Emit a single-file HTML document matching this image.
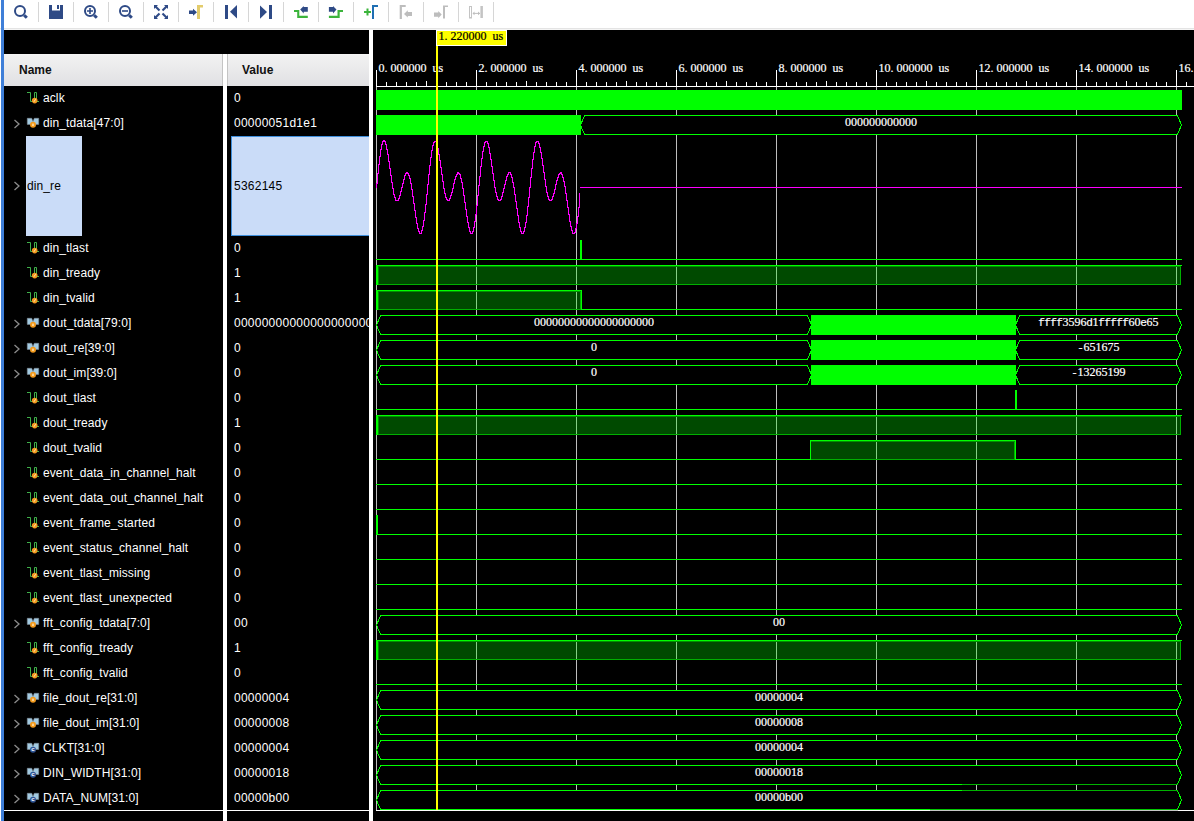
<!DOCTYPE html>
<html><head><meta charset="utf-8">
<style>
*{margin:0;padding:0;box-sizing:border-box}
html,body{width:1194px;height:821px;overflow:hidden;background:#fff}
body{position:relative;font-family:"Liberation Sans",sans-serif}
.abs{position:absolute}
.sep{position:absolute;top:2px;width:1px;height:20px;background:#d6d6d6}
.ic{position:absolute;overflow:visible}
.nm{position:absolute;font-size:12px;line-height:16px;color:#fff;white-space:nowrap;letter-spacing:0.1px}
.vl{letter-spacing:0.25px}
.sel{position:absolute;background:#cadcf8}
.vsel{position:absolute;background:#cadcf8;border:1px solid #3f8fdc;border-right:none}
.hdr{position:absolute;top:54px;height:32px;background:linear-gradient(#f6f6f6 0px,#f1f1f1 2px,#e1e1e4 31px);font-weight:bold;font-size:12px;color:#111}
.wave{position:absolute;left:373px;top:30px}
.ml{font-family:"Liberation Mono",monospace;font-size:11px}
.mono{font-family:"Liberation Serif",serif;font-size:12px;stroke:currentColor;stroke-width:0.2px}
</style></head><body>
<div class="abs" style="left:0;top:0;width:1194px;height:28px;background:#fff"></div>
<div class="abs" style="left:0;top:28px;width:1194px;height:1px;background:#e4e4e4"></div>
<div class="abs" style="left:0;top:29px;width:1194px;height:1px;background:#f4f4f4"></div>
<div class="sep" style="left:38px"></div><div class="sep" style="left:73px"></div><div class="sep" style="left:108px"></div><div class="sep" style="left:143px"></div><div class="sep" style="left:178px"></div><div class="sep" style="left:213px"></div><div class="sep" style="left:248px"></div><div class="sep" style="left:283px"></div><div class="sep" style="left:318px"></div><div class="sep" style="left:353px"></div><div class="sep" style="left:388px"></div><div class="sep" style="left:423px"></div><div class="sep" style="left:458px"></div><div class="sep" style="left:493px"></div>
<svg style="position:absolute;left:0;top:0" width="520" height="28" viewBox="0 0 520 28">
<g fill="none" stroke="#2e4a86" stroke-width="2">
 <circle cx="20" cy="11" r="5"/>
 <circle cx="90" cy="11" r="5"/>
 <circle cx="125" cy="11" r="5"/>
</g>
<g stroke="#2e4a86" stroke-width="3" stroke-linecap="butt">
 <path d="M24.2 15.2 L26.8 17.8"/><path d="M94.2 15.2 L96.8 17.8"/><path d="M129.2 15.2 L131.8 17.8"/>
</g>
<g stroke="#2e4a86" stroke-width="1.6"><path d="M87 11 H93 M90 8 V14"/><path d="M122 11 H128"/></g>
<path d="M49 5 H52 V10.5 H60 V5 H63 V19 H49 Z" fill="#2e4a86"/>
<rect x="57" y="5" width="2" height="4" fill="#2e4a86"/>
<g fill="#2e4a86">
 <path d="M154 5 H158 L154 9 Z"/><path d="M168 5 H164 L168 9 Z"/>
 <path d="M154 19 H158 L154 15 Z"/><path d="M168 19 H164 L168 15 Z"/>
</g>
<g stroke="#2e4a86" stroke-width="2.2">
 <path d="M155.5 6.5 L159.5 10.5"/><path d="M166.5 6.5 L162.5 10.5"/>
 <path d="M155.5 17.5 L159.5 13.5"/><path d="M166.5 17.5 L162.5 13.5"/>
</g>
<path d="M189 10.5 H193 V8.8 L197 12.3 L193 15.8 V14 H189 Z" fill="#2e4a86"/>
<path d="M197 19 V5 H203 V7.5 H200 V19 Z" fill="#e3cc6c"/>
<rect x="225" y="5" width="3" height="14" fill="#2e4a86"/>
<path d="M237 5 V18.5 L230 11.8 Z" fill="#2e4a86"/>
<rect x="269" y="5" width="3" height="14" fill="#2e4a86"/>
<path d="M260 5.5 V18.8 L267 12.1 Z" fill="#2e4a86"/>
<path d="M294 10 H299.3 V15.8 H307.8 V17.9 H297.2 V12 H294 Z" fill="#3cb43c"/>
<path d="M300.2 9.4 L303.7 5.9 V7 H307.8 V11.7 H303.7 V13.5 Z" fill="#2e4a86"/>
<path d="M328.9 15.8 H337.5 V10 H343 V12 H339.7 V17.9 H328.9 Z" fill="#3cb43c"/>
<path d="M336.5 9.4 L333 5.9 V7 H328.9 V11.7 H333 V13.5 Z" fill="#2e4a86"/>
<path d="M364 12 H371 M367.5 8.5 V15.5" stroke="#3cb43c" stroke-width="2"/>
<path d="M372 19 V5 H378 V7 H374 V19 Z" fill="#1f6fb3"/>
<path d="M399.7 19 V5 H405.7 V7 H401.9 V19 Z" fill="#bdbdbd"/>
<path d="M404 14 L407.8 10.3 V12 H412 V16 H407.8 V17.6 Z" fill="#bdbdbd"/>
<path d="M434 12.4 H438.3 V11 L441.7 14.4 L438.3 18.2 V16.8 H434 Z" fill="#bdbdbd"/>
<path d="M443 18.5 V5.5 H448 V7 H445 V18.5 Z" fill="#bdbdbd"/>
<rect x="469.5" y="6.5" width="2" height="11.5" fill="none" stroke="#c4c4c4" stroke-width="1"/>
<rect x="480.4" y="6" width="2.5" height="12" fill="#c4c4c4"/>
<path d="M473 13.4 H480" stroke="#bdbdbd" stroke-width="1"/>
<path d="M472.5 13.4 L474.5 11.6 V15.2 Z M480 13.4 L478 11.6 V15.2 Z" fill="#bdbdbd"/>
</svg>
<div class="abs" style="left:4px;top:30px;width:1190px;height:791px;background:#000"></div>
<div class="abs" style="left:1px;top:0;width:3px;height:821px;background:#3f7fd8"></div>
<div class="hdr" style="left:4px;width:219px;border-right:1px solid #c4c4c4"><span class="abs" style="left:15px;top:9px">Name</span></div>
<div class="abs" style="left:223px;top:54px;width:4px;height:767px;background:#fff"></div>
<div class="hdr" style="left:227px;width:142px;border-left:1px solid #c4c4c4"><span class="abs" style="left:14px;top:9px">Value</span></div>
<div class="abs" style="left:369px;top:30px;width:4px;height:791px;background:#fff"></div>
<svg class="ic" style="left:26px;top:91px" width="14" height="14" viewBox="0 0 14 14"><path d="M1 1.5 H4.5 V10.5 H8.5 V1.5 H10.5 V10.5 H13" fill="none" stroke="#3fb04a" stroke-width="1"/><circle cx="8.7" cy="9.6" r="2.8" fill="#f29a1e"/><path d="M7.9 10.8 L9.6 8.2" fill="none" stroke="#ffe8c8" stroke-width="0.9"/></svg><div class="nm" style="left:43px;top:90px">aclk</div><svg class="ic" style="left:12px;top:117.5px" width="10" height="12" viewBox="0 0 10 12"><path d="M2.5 2 L7 6 L2.5 10" fill="none" stroke="#8c8c8c" stroke-width="1.3"/></svg><svg class="ic" style="left:27px;top:117px" width="14" height="15" viewBox="0 0 14 15"><path d="M0.3 1.3 H4.7 L6 4.4 L7.3 1.3 H11.7 V7.4 H0.3 Z" fill="#a2cae2" stroke="#7d8c96" stroke-width="0.6"/><circle cx="6" cy="7.8" r="3" fill="#f29a1e"/><rect x="5.3" y="6.6" width="1.4" height="2.4" fill="#ffe8c0"/></svg><div class="nm" style="left:43px;top:115px">din_tdata[47:0]</div><div class="sel" style="left:26px;top:136px;width:56px;height:100px"></div><svg class="ic" style="left:12px;top:180.0px" width="10" height="12" viewBox="0 0 10 12"><path d="M2.5 2 L7 6 L2.5 10" fill="none" stroke="#8c8c8c" stroke-width="1.3"/></svg><div class="nm" style="left:27px;top:178px;color:#000">din_re</div><svg class="ic" style="left:26px;top:241px" width="14" height="14" viewBox="0 0 14 14"><path d="M1 1.5 H4.5 V10.5 H8.5 V1.5 H10.5 V10.5 H13" fill="none" stroke="#3fb04a" stroke-width="1"/><circle cx="8.7" cy="9.6" r="2.8" fill="#f29a1e"/><path d="M7.9 10.8 L9.6 8.2" fill="none" stroke="#ffe8c8" stroke-width="0.9"/></svg><div class="nm" style="left:43px;top:240px">din_tlast</div><svg class="ic" style="left:26px;top:266px" width="14" height="14" viewBox="0 0 14 14"><path d="M1 1.5 H4.5 V10.5 H8.5 V1.5 H10.5 V10.5 H13" fill="none" stroke="#3fb04a" stroke-width="1"/><circle cx="8.7" cy="9.6" r="2.8" fill="#f29a1e"/><path d="M7.9 10.8 L9.6 8.2" fill="none" stroke="#ffe8c8" stroke-width="0.9"/></svg><div class="nm" style="left:43px;top:265px">din_tready</div><svg class="ic" style="left:26px;top:291px" width="14" height="14" viewBox="0 0 14 14"><path d="M1 1.5 H4.5 V10.5 H8.5 V1.5 H10.5 V10.5 H13" fill="none" stroke="#3fb04a" stroke-width="1"/><circle cx="8.7" cy="9.6" r="2.8" fill="#f29a1e"/><path d="M7.9 10.8 L9.6 8.2" fill="none" stroke="#ffe8c8" stroke-width="0.9"/></svg><div class="nm" style="left:43px;top:290px">din_tvalid</div><svg class="ic" style="left:12px;top:317.5px" width="10" height="12" viewBox="0 0 10 12"><path d="M2.5 2 L7 6 L2.5 10" fill="none" stroke="#8c8c8c" stroke-width="1.3"/></svg><svg class="ic" style="left:27px;top:317px" width="14" height="15" viewBox="0 0 14 15"><path d="M0.3 1.3 H4.7 L6 4.4 L7.3 1.3 H11.7 V7.4 H0.3 Z" fill="#a2cae2" stroke="#7d8c96" stroke-width="0.6"/><circle cx="6" cy="7.8" r="3" fill="#f29a1e"/><rect x="5.3" y="6.6" width="1.4" height="2.4" fill="#ffe8c0"/></svg><div class="nm" style="left:43px;top:315px">dout_tdata[79:0]</div><svg class="ic" style="left:12px;top:342.5px" width="10" height="12" viewBox="0 0 10 12"><path d="M2.5 2 L7 6 L2.5 10" fill="none" stroke="#8c8c8c" stroke-width="1.3"/></svg><svg class="ic" style="left:27px;top:342px" width="14" height="15" viewBox="0 0 14 15"><path d="M0.3 1.3 H4.7 L6 4.4 L7.3 1.3 H11.7 V7.4 H0.3 Z" fill="#a2cae2" stroke="#7d8c96" stroke-width="0.6"/><circle cx="6" cy="7.8" r="3" fill="#f29a1e"/><rect x="5.3" y="6.6" width="1.4" height="2.4" fill="#ffe8c0"/></svg><div class="nm" style="left:43px;top:340px">dout_re[39:0]</div><svg class="ic" style="left:12px;top:367.5px" width="10" height="12" viewBox="0 0 10 12"><path d="M2.5 2 L7 6 L2.5 10" fill="none" stroke="#8c8c8c" stroke-width="1.3"/></svg><svg class="ic" style="left:27px;top:367px" width="14" height="15" viewBox="0 0 14 15"><path d="M0.3 1.3 H4.7 L6 4.4 L7.3 1.3 H11.7 V7.4 H0.3 Z" fill="#a2cae2" stroke="#7d8c96" stroke-width="0.6"/><circle cx="6" cy="7.8" r="3" fill="#f29a1e"/><rect x="5.3" y="6.6" width="1.4" height="2.4" fill="#ffe8c0"/></svg><div class="nm" style="left:43px;top:365px">dout_im[39:0]</div><svg class="ic" style="left:26px;top:391px" width="14" height="14" viewBox="0 0 14 14"><path d="M1 1.5 H4.5 V10.5 H8.5 V1.5 H10.5 V10.5 H13" fill="none" stroke="#3fb04a" stroke-width="1"/><circle cx="8.7" cy="9.6" r="2.8" fill="#f29a1e"/><path d="M7.9 10.8 L9.6 8.2" fill="none" stroke="#ffe8c8" stroke-width="0.9"/></svg><div class="nm" style="left:43px;top:390px">dout_tlast</div><svg class="ic" style="left:26px;top:416px" width="14" height="14" viewBox="0 0 14 14"><path d="M1 1.5 H4.5 V10.5 H8.5 V1.5 H10.5 V10.5 H13" fill="none" stroke="#3fb04a" stroke-width="1"/><circle cx="8.7" cy="9.6" r="2.8" fill="#f29a1e"/><path d="M7.9 10.8 L9.6 8.2" fill="none" stroke="#ffe8c8" stroke-width="0.9"/></svg><div class="nm" style="left:43px;top:415px">dout_tready</div><svg class="ic" style="left:26px;top:441px" width="14" height="14" viewBox="0 0 14 14"><path d="M1 1.5 H4.5 V10.5 H8.5 V1.5 H10.5 V10.5 H13" fill="none" stroke="#3fb04a" stroke-width="1"/><circle cx="8.7" cy="9.6" r="2.8" fill="#f29a1e"/><path d="M7.9 10.8 L9.6 8.2" fill="none" stroke="#ffe8c8" stroke-width="0.9"/></svg><div class="nm" style="left:43px;top:440px">dout_tvalid</div><svg class="ic" style="left:26px;top:466px" width="14" height="14" viewBox="0 0 14 14"><path d="M1 1.5 H4.5 V10.5 H8.5 V1.5 H10.5 V10.5 H13" fill="none" stroke="#3fb04a" stroke-width="1"/><circle cx="8.7" cy="9.6" r="2.8" fill="#f29a1e"/><path d="M7.9 10.8 L9.6 8.2" fill="none" stroke="#ffe8c8" stroke-width="0.9"/></svg><div class="nm" style="left:43px;top:465px">event_data_in_channel_halt</div><svg class="ic" style="left:26px;top:491px" width="14" height="14" viewBox="0 0 14 14"><path d="M1 1.5 H4.5 V10.5 H8.5 V1.5 H10.5 V10.5 H13" fill="none" stroke="#3fb04a" stroke-width="1"/><circle cx="8.7" cy="9.6" r="2.8" fill="#f29a1e"/><path d="M7.9 10.8 L9.6 8.2" fill="none" stroke="#ffe8c8" stroke-width="0.9"/></svg><div class="nm" style="left:43px;top:490px">event_data_out_channel_halt</div><svg class="ic" style="left:26px;top:516px" width="14" height="14" viewBox="0 0 14 14"><path d="M1 1.5 H4.5 V10.5 H8.5 V1.5 H10.5 V10.5 H13" fill="none" stroke="#3fb04a" stroke-width="1"/><circle cx="8.7" cy="9.6" r="2.8" fill="#f29a1e"/><path d="M7.9 10.8 L9.6 8.2" fill="none" stroke="#ffe8c8" stroke-width="0.9"/></svg><div class="nm" style="left:43px;top:515px">event_frame_started</div><svg class="ic" style="left:26px;top:541px" width="14" height="14" viewBox="0 0 14 14"><path d="M1 1.5 H4.5 V10.5 H8.5 V1.5 H10.5 V10.5 H13" fill="none" stroke="#3fb04a" stroke-width="1"/><circle cx="8.7" cy="9.6" r="2.8" fill="#f29a1e"/><path d="M7.9 10.8 L9.6 8.2" fill="none" stroke="#ffe8c8" stroke-width="0.9"/></svg><div class="nm" style="left:43px;top:540px">event_status_channel_halt</div><svg class="ic" style="left:26px;top:566px" width="14" height="14" viewBox="0 0 14 14"><path d="M1 1.5 H4.5 V10.5 H8.5 V1.5 H10.5 V10.5 H13" fill="none" stroke="#3fb04a" stroke-width="1"/><circle cx="8.7" cy="9.6" r="2.8" fill="#f29a1e"/><path d="M7.9 10.8 L9.6 8.2" fill="none" stroke="#ffe8c8" stroke-width="0.9"/></svg><div class="nm" style="left:43px;top:565px">event_tlast_missing</div><svg class="ic" style="left:26px;top:591px" width="14" height="14" viewBox="0 0 14 14"><path d="M1 1.5 H4.5 V10.5 H8.5 V1.5 H10.5 V10.5 H13" fill="none" stroke="#3fb04a" stroke-width="1"/><circle cx="8.7" cy="9.6" r="2.8" fill="#f29a1e"/><path d="M7.9 10.8 L9.6 8.2" fill="none" stroke="#ffe8c8" stroke-width="0.9"/></svg><div class="nm" style="left:43px;top:590px">event_tlast_unexpected</div><svg class="ic" style="left:12px;top:617.5px" width="10" height="12" viewBox="0 0 10 12"><path d="M2.5 2 L7 6 L2.5 10" fill="none" stroke="#8c8c8c" stroke-width="1.3"/></svg><svg class="ic" style="left:27px;top:617px" width="14" height="15" viewBox="0 0 14 15"><path d="M0.3 1.3 H4.7 L6 4.4 L7.3 1.3 H11.7 V7.4 H0.3 Z" fill="#a2cae2" stroke="#7d8c96" stroke-width="0.6"/><circle cx="6" cy="7.8" r="3" fill="#f29a1e"/><rect x="5.3" y="6.6" width="1.4" height="2.4" fill="#ffe8c0"/></svg><div class="nm" style="left:43px;top:615px">fft_config_tdata[7:0]</div><svg class="ic" style="left:26px;top:641px" width="14" height="14" viewBox="0 0 14 14"><path d="M1 1.5 H4.5 V10.5 H8.5 V1.5 H10.5 V10.5 H13" fill="none" stroke="#3fb04a" stroke-width="1"/><circle cx="8.7" cy="9.6" r="2.8" fill="#f29a1e"/><path d="M7.9 10.8 L9.6 8.2" fill="none" stroke="#ffe8c8" stroke-width="0.9"/></svg><div class="nm" style="left:43px;top:640px">fft_config_tready</div><svg class="ic" style="left:26px;top:666px" width="14" height="14" viewBox="0 0 14 14"><path d="M1 1.5 H4.5 V10.5 H8.5 V1.5 H10.5 V10.5 H13" fill="none" stroke="#3fb04a" stroke-width="1"/><circle cx="8.7" cy="9.6" r="2.8" fill="#f29a1e"/><path d="M7.9 10.8 L9.6 8.2" fill="none" stroke="#ffe8c8" stroke-width="0.9"/></svg><div class="nm" style="left:43px;top:665px">fft_config_tvalid</div><svg class="ic" style="left:12px;top:692.5px" width="10" height="12" viewBox="0 0 10 12"><path d="M2.5 2 L7 6 L2.5 10" fill="none" stroke="#8c8c8c" stroke-width="1.3"/></svg><svg class="ic" style="left:27px;top:692px" width="14" height="15" viewBox="0 0 14 15"><path d="M0.3 1.3 H4.7 L6 4.4 L7.3 1.3 H11.7 V7.4 H0.3 Z" fill="#a2cae2" stroke="#7d8c96" stroke-width="0.6"/><circle cx="6" cy="7.8" r="3" fill="#f29a1e"/><rect x="5.3" y="6.6" width="1.4" height="2.4" fill="#ffe8c0"/></svg><div class="nm" style="left:43px;top:690px">file_dout_re[31:0]</div><svg class="ic" style="left:12px;top:717.5px" width="10" height="12" viewBox="0 0 10 12"><path d="M2.5 2 L7 6 L2.5 10" fill="none" stroke="#8c8c8c" stroke-width="1.3"/></svg><svg class="ic" style="left:27px;top:717px" width="14" height="15" viewBox="0 0 14 15"><path d="M0.3 1.3 H4.7 L6 4.4 L7.3 1.3 H11.7 V7.4 H0.3 Z" fill="#a2cae2" stroke="#7d8c96" stroke-width="0.6"/><circle cx="6" cy="7.8" r="3" fill="#f29a1e"/><rect x="5.3" y="6.6" width="1.4" height="2.4" fill="#ffe8c0"/></svg><div class="nm" style="left:43px;top:715px">file_dout_im[31:0]</div><svg class="ic" style="left:12px;top:742.5px" width="10" height="12" viewBox="0 0 10 12"><path d="M2.5 2 L7 6 L2.5 10" fill="none" stroke="#8c8c8c" stroke-width="1.3"/></svg><svg class="ic" style="left:27px;top:742px" width="14" height="15" viewBox="0 0 14 15"><path d="M0.3 1.3 H4.7 L6 4.4 L7.3 1.3 H11.7 V7.4 H0.3 Z" fill="#a2cae2" stroke="#7d8c96" stroke-width="0.6"/><circle cx="6" cy="7.8" r="3" fill="#2f5596"/><text x="6" y="9.4" font-size="6" font-weight="bold" fill="#fff" text-anchor="middle" font-family="Liberation Sans">c</text></svg><div class="nm" style="left:43px;top:740px">CLKT[31:0]</div><svg class="ic" style="left:12px;top:767.5px" width="10" height="12" viewBox="0 0 10 12"><path d="M2.5 2 L7 6 L2.5 10" fill="none" stroke="#8c8c8c" stroke-width="1.3"/></svg><svg class="ic" style="left:27px;top:767px" width="14" height="15" viewBox="0 0 14 15"><path d="M0.3 1.3 H4.7 L6 4.4 L7.3 1.3 H11.7 V7.4 H0.3 Z" fill="#a2cae2" stroke="#7d8c96" stroke-width="0.6"/><circle cx="6" cy="7.8" r="3" fill="#2f5596"/><text x="6" y="9.4" font-size="6" font-weight="bold" fill="#fff" text-anchor="middle" font-family="Liberation Sans">c</text></svg><div class="nm" style="left:43px;top:765px">DIN_WIDTH[31:0]</div><svg class="ic" style="left:12px;top:792.5px" width="10" height="12" viewBox="0 0 10 12"><path d="M2.5 2 L7 6 L2.5 10" fill="none" stroke="#8c8c8c" stroke-width="1.3"/></svg><svg class="ic" style="left:27px;top:792px" width="14" height="15" viewBox="0 0 14 15"><path d="M0.3 1.3 H4.7 L6 4.4 L7.3 1.3 H11.7 V7.4 H0.3 Z" fill="#a2cae2" stroke="#7d8c96" stroke-width="0.6"/><circle cx="6" cy="7.8" r="3" fill="#2f5596"/><text x="6" y="9.4" font-size="6" font-weight="bold" fill="#fff" text-anchor="middle" font-family="Liberation Sans">c</text></svg><div class="nm" style="left:43px;top:790px">DATA_NUM[31:0]</div>
<div class="nm vl" style="left:234px;top:90px">0</div><div class="nm vl" style="left:234px;top:115px">00000051d1e1</div><div class="vsel" style="left:231px;top:136px;width:138px;height:100px"></div><div class="nm vl" style="left:234px;top:178px;color:#000">5362145</div><div class="nm vl" style="left:234px;top:240px">0</div><div class="nm vl" style="left:234px;top:265px">1</div><div class="nm vl" style="left:234px;top:290px">1</div><div class="nm vl" style="left:234px;top:315px">00000000000000000000</div><div class="nm vl" style="left:234px;top:340px">0</div><div class="nm vl" style="left:234px;top:365px">0</div><div class="nm vl" style="left:234px;top:390px">0</div><div class="nm vl" style="left:234px;top:415px">1</div><div class="nm vl" style="left:234px;top:440px">0</div><div class="nm vl" style="left:234px;top:465px">0</div><div class="nm vl" style="left:234px;top:490px">0</div><div class="nm vl" style="left:234px;top:515px">0</div><div class="nm vl" style="left:234px;top:540px">0</div><div class="nm vl" style="left:234px;top:565px">0</div><div class="nm vl" style="left:234px;top:590px">0</div><div class="nm vl" style="left:234px;top:615px">00</div><div class="nm vl" style="left:234px;top:640px">1</div><div class="nm vl" style="left:234px;top:665px">0</div><div class="nm vl" style="left:234px;top:690px">00000004</div><div class="nm vl" style="left:234px;top:715px">00000008</div><div class="nm vl" style="left:234px;top:740px">00000004</div><div class="nm vl" style="left:234px;top:765px">00000018</div><div class="nm vl" style="left:234px;top:790px">00000b00</div>
<div class="abs" style="left:4px;top:810px;width:219px;height:1px;background:#fff"></div>
<div class="abs" style="left:227px;top:810px;width:142px;height:1px;background:#fff"></div>
<svg class="wave" width="821" height="791" viewBox="373 30 821 791" shape-rendering="crispEdges"><text y="72" class="mono" fill="#fff" style="color:#fff"><tspan x="378.5">0</tspan><tspan x="384.5">.</tspan><tspan x="390.5">0</tspan><tspan x="396.5">0</tspan><tspan x="402.5">0</tspan><tspan x="408.5">0</tspan><tspan x="414.5">0</tspan><tspan x="420.5">0</tspan><tspan x="432.5">u</tspan><tspan x="438.5">s</tspan></text><text y="72" class="mono" fill="#fff" style="color:#fff"><tspan x="478.5">2</tspan><tspan x="484.5">.</tspan><tspan x="490.5">0</tspan><tspan x="496.5">0</tspan><tspan x="502.5">0</tspan><tspan x="508.5">0</tspan><tspan x="514.5">0</tspan><tspan x="520.5">0</tspan><tspan x="532.5">u</tspan><tspan x="538.5">s</tspan></text><text y="72" class="mono" fill="#fff" style="color:#fff"><tspan x="578.5">4</tspan><tspan x="584.5">.</tspan><tspan x="590.5">0</tspan><tspan x="596.5">0</tspan><tspan x="602.5">0</tspan><tspan x="608.5">0</tspan><tspan x="614.5">0</tspan><tspan x="620.5">0</tspan><tspan x="632.5">u</tspan><tspan x="638.5">s</tspan></text><text y="72" class="mono" fill="#fff" style="color:#fff"><tspan x="678.5">6</tspan><tspan x="684.5">.</tspan><tspan x="690.5">0</tspan><tspan x="696.5">0</tspan><tspan x="702.5">0</tspan><tspan x="708.5">0</tspan><tspan x="714.5">0</tspan><tspan x="720.5">0</tspan><tspan x="732.5">u</tspan><tspan x="738.5">s</tspan></text><text y="72" class="mono" fill="#fff" style="color:#fff"><tspan x="778.5">8</tspan><tspan x="784.5">.</tspan><tspan x="790.5">0</tspan><tspan x="796.5">0</tspan><tspan x="802.5">0</tspan><tspan x="808.5">0</tspan><tspan x="814.5">0</tspan><tspan x="820.5">0</tspan><tspan x="832.5">u</tspan><tspan x="838.5">s</tspan></text><text y="72" class="mono" fill="#fff" style="color:#fff"><tspan x="878.5">1</tspan><tspan x="884.5">0</tspan><tspan x="890.5">.</tspan><tspan x="896.5">0</tspan><tspan x="902.5">0</tspan><tspan x="908.5">0</tspan><tspan x="914.5">0</tspan><tspan x="920.5">0</tspan><tspan x="926.5">0</tspan><tspan x="938.5">u</tspan><tspan x="944.5">s</tspan></text><text y="72" class="mono" fill="#fff" style="color:#fff"><tspan x="978.5">1</tspan><tspan x="984.5">2</tspan><tspan x="990.5">.</tspan><tspan x="996.5">0</tspan><tspan x="1002.5">0</tspan><tspan x="1008.5">0</tspan><tspan x="1014.5">0</tspan><tspan x="1020.5">0</tspan><tspan x="1026.5">0</tspan><tspan x="1038.5">u</tspan><tspan x="1044.5">s</tspan></text><text y="72" class="mono" fill="#fff" style="color:#fff"><tspan x="1078.5">1</tspan><tspan x="1084.5">4</tspan><tspan x="1090.5">.</tspan><tspan x="1096.5">0</tspan><tspan x="1102.5">0</tspan><tspan x="1108.5">0</tspan><tspan x="1114.5">0</tspan><tspan x="1120.5">0</tspan><tspan x="1126.5">0</tspan><tspan x="1138.5">u</tspan><tspan x="1144.5">s</tspan></text><text y="72" class="mono" fill="#fff" style="color:#fff"><tspan x="1178.5">1</tspan><tspan x="1184.5">6</tspan><tspan x="1190.5">.</tspan><tspan x="1196.5">0</tspan><tspan x="1202.5">0</tspan><tspan x="1208.5">0</tspan><tspan x="1214.5">0</tspan><tspan x="1220.5">0</tspan><tspan x="1226.5">0</tspan><tspan x="1238.5">u</tspan><tspan x="1244.5">s</tspan></text><rect x="376" y="87" width="1" height="723" fill="#bdbdbd"/><rect x="476" y="87" width="1" height="723" fill="#bdbdbd"/><rect x="576" y="87" width="1" height="723" fill="#bdbdbd"/><rect x="676" y="87" width="1" height="723" fill="#bdbdbd"/><rect x="776" y="87" width="1" height="723" fill="#bdbdbd"/><rect x="876" y="87" width="1" height="723" fill="#bdbdbd"/><rect x="976" y="87" width="1" height="723" fill="#bdbdbd"/><rect x="1076" y="87" width="1" height="723" fill="#bdbdbd"/><rect x="1176" y="87" width="1" height="723" fill="#bdbdbd"/><rect x="376" y="86" width="818" height="1" fill="#fff"/><rect x="376" y="70" width="1" height="16" fill="#fff"/><rect x="386" y="82" width="1" height="4" fill="#fff"/><rect x="396" y="82" width="1" height="4" fill="#fff"/><rect x="406" y="82" width="1" height="4" fill="#fff"/><rect x="416" y="82" width="1" height="4" fill="#fff"/><rect x="426" y="81" width="1" height="5" fill="#fff"/><rect x="436" y="82" width="1" height="4" fill="#fff"/><rect x="446" y="82" width="1" height="4" fill="#fff"/><rect x="456" y="82" width="1" height="4" fill="#fff"/><rect x="466" y="82" width="1" height="4" fill="#fff"/><rect x="476" y="70" width="1" height="16" fill="#fff"/><rect x="486" y="82" width="1" height="4" fill="#fff"/><rect x="496" y="82" width="1" height="4" fill="#fff"/><rect x="506" y="82" width="1" height="4" fill="#fff"/><rect x="516" y="82" width="1" height="4" fill="#fff"/><rect x="526" y="81" width="1" height="5" fill="#fff"/><rect x="536" y="82" width="1" height="4" fill="#fff"/><rect x="546" y="82" width="1" height="4" fill="#fff"/><rect x="556" y="82" width="1" height="4" fill="#fff"/><rect x="566" y="82" width="1" height="4" fill="#fff"/><rect x="576" y="70" width="1" height="16" fill="#fff"/><rect x="586" y="82" width="1" height="4" fill="#fff"/><rect x="596" y="82" width="1" height="4" fill="#fff"/><rect x="606" y="82" width="1" height="4" fill="#fff"/><rect x="616" y="82" width="1" height="4" fill="#fff"/><rect x="626" y="81" width="1" height="5" fill="#fff"/><rect x="636" y="82" width="1" height="4" fill="#fff"/><rect x="646" y="82" width="1" height="4" fill="#fff"/><rect x="656" y="82" width="1" height="4" fill="#fff"/><rect x="666" y="82" width="1" height="4" fill="#fff"/><rect x="676" y="70" width="1" height="16" fill="#fff"/><rect x="686" y="82" width="1" height="4" fill="#fff"/><rect x="696" y="82" width="1" height="4" fill="#fff"/><rect x="706" y="82" width="1" height="4" fill="#fff"/><rect x="716" y="82" width="1" height="4" fill="#fff"/><rect x="726" y="81" width="1" height="5" fill="#fff"/><rect x="736" y="82" width="1" height="4" fill="#fff"/><rect x="746" y="82" width="1" height="4" fill="#fff"/><rect x="756" y="82" width="1" height="4" fill="#fff"/><rect x="766" y="82" width="1" height="4" fill="#fff"/><rect x="776" y="70" width="1" height="16" fill="#fff"/><rect x="786" y="82" width="1" height="4" fill="#fff"/><rect x="796" y="82" width="1" height="4" fill="#fff"/><rect x="806" y="82" width="1" height="4" fill="#fff"/><rect x="816" y="82" width="1" height="4" fill="#fff"/><rect x="826" y="81" width="1" height="5" fill="#fff"/><rect x="836" y="82" width="1" height="4" fill="#fff"/><rect x="846" y="82" width="1" height="4" fill="#fff"/><rect x="856" y="82" width="1" height="4" fill="#fff"/><rect x="866" y="82" width="1" height="4" fill="#fff"/><rect x="876" y="70" width="1" height="16" fill="#fff"/><rect x="886" y="82" width="1" height="4" fill="#fff"/><rect x="896" y="82" width="1" height="4" fill="#fff"/><rect x="906" y="82" width="1" height="4" fill="#fff"/><rect x="916" y="82" width="1" height="4" fill="#fff"/><rect x="926" y="81" width="1" height="5" fill="#fff"/><rect x="936" y="82" width="1" height="4" fill="#fff"/><rect x="946" y="82" width="1" height="4" fill="#fff"/><rect x="956" y="82" width="1" height="4" fill="#fff"/><rect x="966" y="82" width="1" height="4" fill="#fff"/><rect x="976" y="70" width="1" height="16" fill="#fff"/><rect x="986" y="82" width="1" height="4" fill="#fff"/><rect x="996" y="82" width="1" height="4" fill="#fff"/><rect x="1006" y="82" width="1" height="4" fill="#fff"/><rect x="1016" y="82" width="1" height="4" fill="#fff"/><rect x="1026" y="81" width="1" height="5" fill="#fff"/><rect x="1036" y="82" width="1" height="4" fill="#fff"/><rect x="1046" y="82" width="1" height="4" fill="#fff"/><rect x="1056" y="82" width="1" height="4" fill="#fff"/><rect x="1066" y="82" width="1" height="4" fill="#fff"/><rect x="1076" y="70" width="1" height="16" fill="#fff"/><rect x="1086" y="82" width="1" height="4" fill="#fff"/><rect x="1096" y="82" width="1" height="4" fill="#fff"/><rect x="1106" y="82" width="1" height="4" fill="#fff"/><rect x="1116" y="82" width="1" height="4" fill="#fff"/><rect x="1126" y="81" width="1" height="5" fill="#fff"/><rect x="1136" y="82" width="1" height="4" fill="#fff"/><rect x="1146" y="82" width="1" height="4" fill="#fff"/><rect x="1156" y="82" width="1" height="4" fill="#fff"/><rect x="1166" y="82" width="1" height="4" fill="#fff"/><rect x="1176" y="70" width="1" height="16" fill="#fff"/><rect x="1186" y="82" width="1" height="4" fill="#fff"/><rect x="376" y="90" width="806" height="20" fill="#00ff00"/><rect x="376" y="115" width="205" height="20" fill="#00ff00"/><polygon points="580.5,125 584.5,115.5 1177.5,115.5 1181.5,125 1177.5,134.5 584.5,134.5" fill="#000" stroke="#00ff00" stroke-width="1"/><text y="126" class="mono" fill="#fff" style="color:#fff"><tspan x="845.0">0</tspan><tspan x="851.0">0</tspan><tspan x="857.0">0</tspan><tspan x="863.0">0</tspan><tspan x="869.0">0</tspan><tspan x="875.0">0</tspan><tspan x="881.0">0</tspan><tspan x="887.0">0</tspan><tspan x="893.0">0</tspan><tspan x="899.0">0</tspan><tspan x="905.0">0</tspan><tspan x="911.0">0</tspan></text><rect x="376" y="259" width="806" height="1" fill="#00ff00"/><rect x="580" y="240" width="2" height="20" fill="#00ff00"/><rect x="376" y="265" width="805" height="20" fill="rgba(0,255,0,0.29)"/><rect x="376" y="284" width="805" height="1" fill="#00b000"/><rect x="1180" y="266" width="1" height="18" fill="#00b000"/><rect x="376" y="266" width="805" height="1" fill="#009000"/><rect x="376" y="265" width="806" height="1" fill="#00ff00"/><rect x="378" y="266" width="1" height="18" fill="#009000"/><rect x="376" y="265" width="2" height="20" fill="#00ff00"/><rect x="376" y="290" width="205" height="20" fill="rgba(0,255,0,0.29)"/><rect x="376" y="309" width="205" height="1" fill="#00b000"/><rect x="580" y="291" width="1" height="18" fill="#00b000"/><rect x="376" y="291" width="205" height="1" fill="#009000"/><rect x="376" y="290" width="206" height="1" fill="#00ff00"/><rect x="378" y="291" width="1" height="18" fill="#009000"/><rect x="376" y="290" width="2" height="20" fill="#00ff00"/><rect x="581" y="290" width="1" height="20" fill="#00ff00"/><rect x="581" y="309" width="601" height="1" fill="#00ff00"/><polygon points="376.5,325 380.5,315.5 807.5,315.5 811.5,325 807.5,334.5 380.5,334.5" fill="#000" stroke="#00ff00" stroke-width="1"/><text y="326" class="mono" fill="#fff" style="color:#fff"><tspan x="534.0">0</tspan><tspan x="540.0">0</tspan><tspan x="546.0">0</tspan><tspan x="552.0">0</tspan><tspan x="558.0">0</tspan><tspan x="564.0">0</tspan><tspan x="570.0">0</tspan><tspan x="576.0">0</tspan><tspan x="582.0">0</tspan><tspan x="588.0">0</tspan><tspan x="594.0">0</tspan><tspan x="600.0">0</tspan><tspan x="606.0">0</tspan><tspan x="612.0">0</tspan><tspan x="618.0">0</tspan><tspan x="624.0">0</tspan><tspan x="630.0">0</tspan><tspan x="636.0">0</tspan><tspan x="642.0">0</tspan><tspan x="648.0">0</tspan></text><rect x="811" y="315" width="205" height="20" fill="#00ff00"/><polygon points="1015.5,325 1019.5,315.5 1177.5,315.5 1181.5,325 1177.5,334.5 1019.5,334.5" fill="#000" stroke="#00ff00" stroke-width="1"/><text y="326" class="mono" fill="#fff" style="color:#fff"><tspan class="ml" x="1038.3">f</tspan><tspan class="ml" x="1044.3">f</tspan><tspan class="ml" x="1050.3">f</tspan><tspan class="ml" x="1056.3">f</tspan><tspan x="1062.5">3</tspan><tspan x="1068.5">5</tspan><tspan x="1074.5">9</tspan><tspan x="1080.5">6</tspan><tspan class="ml" x="1086.3">d</tspan><tspan x="1092.5">1</tspan><tspan class="ml" x="1098.3">f</tspan><tspan class="ml" x="1104.3">f</tspan><tspan class="ml" x="1110.3">f</tspan><tspan class="ml" x="1116.3">f</tspan><tspan class="ml" x="1122.3">f</tspan><tspan x="1128.5">6</tspan><tspan x="1134.5">0</tspan><tspan class="ml" x="1140.3">e</tspan><tspan x="1146.5">6</tspan><tspan x="1152.5">5</tspan></text><polygon points="376.5,350 380.5,340.5 807.5,340.5 811.5,350 807.5,359.5 380.5,359.5" fill="#000" stroke="#00ff00" stroke-width="1"/><text y="351" class="mono" fill="#fff" style="color:#fff"><tspan x="591.0">0</tspan></text><rect x="811" y="340" width="205" height="20" fill="#00ff00"/><polygon points="1015.5,350 1019.5,340.5 1177.5,340.5 1181.5,350 1177.5,359.5 1019.5,359.5" fill="#000" stroke="#00ff00" stroke-width="1"/><text y="351" class="mono" fill="#fff" style="color:#fff"><tspan class="ml" x="1077.3">-</tspan><tspan x="1083.5">6</tspan><tspan x="1089.5">5</tspan><tspan x="1095.5">1</tspan><tspan x="1101.5">6</tspan><tspan x="1107.5">7</tspan><tspan x="1113.5">5</tspan></text><polygon points="376.5,375 380.5,365.5 807.5,365.5 811.5,375 807.5,384.5 380.5,384.5" fill="#000" stroke="#00ff00" stroke-width="1"/><text y="376" class="mono" fill="#fff" style="color:#fff"><tspan x="591.0">0</tspan></text><rect x="811" y="365" width="205" height="20" fill="#00ff00"/><polygon points="1015.5,375 1019.5,365.5 1177.5,365.5 1181.5,375 1177.5,384.5 1019.5,384.5" fill="#000" stroke="#00ff00" stroke-width="1"/><text y="376" class="mono" fill="#fff" style="color:#fff"><tspan class="ml" x="1071.3">-</tspan><tspan x="1077.5">1</tspan><tspan x="1083.5">3</tspan><tspan x="1089.5">2</tspan><tspan x="1095.5">6</tspan><tspan x="1101.5">5</tspan><tspan x="1107.5">1</tspan><tspan x="1113.5">9</tspan><tspan x="1119.5">9</tspan></text><rect x="376" y="409" width="806" height="1" fill="#00ff00"/><rect x="1015" y="390" width="2" height="20" fill="#00ff00"/><rect x="376" y="415" width="805" height="20" fill="rgba(0,255,0,0.29)"/><rect x="376" y="434" width="805" height="1" fill="#00b000"/><rect x="1180" y="416" width="1" height="18" fill="#00b000"/><rect x="376" y="416" width="805" height="1" fill="#009000"/><rect x="376" y="415" width="806" height="1" fill="#00ff00"/><rect x="378" y="416" width="1" height="18" fill="#009000"/><rect x="376" y="415" width="2" height="20" fill="#00ff00"/><rect x="376" y="459" width="435" height="1" fill="#00ff00"/><rect x="810" y="440" width="205" height="20" fill="rgba(0,255,0,0.29)"/><rect x="810" y="459" width="205" height="1" fill="#00b000"/><rect x="1014" y="441" width="1" height="18" fill="#00b000"/><rect x="810" y="441" width="205" height="1" fill="#009000"/><rect x="810" y="440" width="206" height="1" fill="#00ff00"/><rect x="810" y="440" width="1" height="20" fill="#00ff00"/><rect x="1015" y="440" width="1" height="20" fill="#00ff00"/><rect x="1015" y="459" width="167" height="1" fill="#00ff00"/><rect x="376" y="484" width="806" height="1" fill="#00ff00"/><rect x="376" y="509" width="806" height="1" fill="#00ff00"/><rect x="376" y="534" width="806" height="1" fill="#00ff00"/><rect x="376" y="515" width="2" height="20" fill="#00ff00"/><rect x="376" y="559" width="806" height="1" fill="#00ff00"/><rect x="376" y="584" width="806" height="1" fill="#00ff00"/><rect x="376" y="609" width="806" height="1" fill="#00ff00"/><polygon points="376.5,625 380.5,615.5 1177.5,615.5 1181.5,625 1177.5,634.5 380.5,634.5" fill="#000" stroke="#00ff00" stroke-width="1"/><text y="626" class="mono" fill="#fff" style="color:#fff"><tspan x="773.0">0</tspan><tspan x="779.0">0</tspan></text><rect x="376" y="640" width="805" height="20" fill="rgba(0,255,0,0.29)"/><rect x="376" y="659" width="805" height="1" fill="#00b000"/><rect x="1180" y="641" width="1" height="18" fill="#00b000"/><rect x="376" y="641" width="805" height="1" fill="#009000"/><rect x="376" y="640" width="806" height="1" fill="#00ff00"/><rect x="378" y="641" width="1" height="18" fill="#009000"/><rect x="376" y="640" width="2" height="20" fill="#00ff00"/><rect x="376" y="684" width="806" height="1" fill="#00ff00"/><polygon points="376.5,700 380.5,690.5 1177.5,690.5 1181.5,700 1177.5,709.5 380.5,709.5" fill="#000" stroke="#00ff00" stroke-width="1"/><text y="701" class="mono" fill="#fff" style="color:#fff"><tspan x="755.0">0</tspan><tspan x="761.0">0</tspan><tspan x="767.0">0</tspan><tspan x="773.0">0</tspan><tspan x="779.0">0</tspan><tspan x="785.0">0</tspan><tspan x="791.0">0</tspan><tspan x="797.0">4</tspan></text><polygon points="376.5,725 380.5,715.5 1177.5,715.5 1181.5,725 1177.5,734.5 380.5,734.5" fill="#000" stroke="#00ff00" stroke-width="1"/><text y="726" class="mono" fill="#fff" style="color:#fff"><tspan x="755.0">0</tspan><tspan x="761.0">0</tspan><tspan x="767.0">0</tspan><tspan x="773.0">0</tspan><tspan x="779.0">0</tspan><tspan x="785.0">0</tspan><tspan x="791.0">0</tspan><tspan x="797.0">8</tspan></text><polygon points="376.5,750 380.5,740.5 1177.5,740.5 1181.5,750 1177.5,759.5 380.5,759.5" fill="#000" stroke="#00ff00" stroke-width="1"/><text y="751" class="mono" fill="#fff" style="color:#fff"><tspan x="755.0">0</tspan><tspan x="761.0">0</tspan><tspan x="767.0">0</tspan><tspan x="773.0">0</tspan><tspan x="779.0">0</tspan><tspan x="785.0">0</tspan><tspan x="791.0">0</tspan><tspan x="797.0">4</tspan></text><polygon points="376.5,775 380.5,765.5 1177.5,765.5 1181.5,775 1177.5,784.5 380.5,784.5" fill="#000" stroke="#00ff00" stroke-width="1"/><text y="776" class="mono" fill="#fff" style="color:#fff"><tspan x="755.0">0</tspan><tspan x="761.0">0</tspan><tspan x="767.0">0</tspan><tspan x="773.0">0</tspan><tspan x="779.0">0</tspan><tspan x="785.0">0</tspan><tspan x="791.0">1</tspan><tspan x="797.0">8</tspan></text><polygon points="376.5,800 380.5,790.5 1177.5,790.5 1181.5,800 1177.5,809.5 380.5,809.5" fill="#000" stroke="#00ff00" stroke-width="1"/><text y="801" class="mono" fill="#fff" style="color:#fff"><tspan x="755.0">0</tspan><tspan x="761.0">0</tspan><tspan x="767.0">0</tspan><tspan x="773.0">0</tspan><tspan x="779.0">0</tspan><tspan class="ml" x="784.8">b</tspan><tspan x="791.0">0</tspan><tspan x="797.0">0</tspan></text><path d="M376.5 188 V183.5 H377.5 V173.5 H378.5 V164.5 H379.5 V156.5 H380.5 V149.5 H381.5 V144.5 H382.5 V141.5 H383.5 V140.5 H384.5 V141.5 H385.5 V144.5 H386.5 V149.5 H387.5 V154.5 H388.5 V161.5 H389.5 V168.5 H390.5 V175.5 H391.5 V182.5 H392.5 V188.5 H393.5 V194.5 H394.5 V197.5 H395.5 V200.5 H396.5 V200.5 H397.5 V200.5 H398.5 V198.5 H399.5 V195.5 H400.5 V191.5 H401.5 V187.5 H402.5 V183.5 H403.5 V179.5 H404.5 V175.5 H405.5 V173.5 H406.5 V172.5 H407.5 V173.5 H408.5 V175.5 H409.5 V178.5 H410.5 V183.5 H411.5 V189.5 H412.5 V196.5 H413.5 V203.5 H414.5 V210.5 H415.5 V217.5 H416.5 V223.5 H417.5 V228.5 H418.5 V231.5 H419.5 V233.5 H420.5 V233.5 H421.5 V230.5 H422.5 V226.5 H423.5 V220.5 H424.5 V212.5 H425.5 V204.5 H426.5 V194.5 H427.5 V184.5 H428.5 V174.5 H429.5 V165.5 H430.5 V157.5 H431.5 V150.5 H432.5 V145.5 H433.5 V142.5 H434.5 V141.5 H435.5 V141.5 H436.5 V144.5 H437.5 V148.5 H438.5 V154.5 H439.5 V160.5 H440.5 V167.5 H441.5 V174.5 H442.5 V181.5 H443.5 V188.5 H444.5 V193.5 H445.5 V197.5 H446.5 V199.5 H447.5 V200.5 H448.5 V200.5 H449.5 V198.5 H450.5 V195.5 H451.5 V192.5 H452.5 V188.5 H453.5 V183.5 H454.5 V179.5 H455.5 V176.5 H456.5 V174.5 H457.5 V172.5 H458.5 V173.5 H459.5 V174.5 H460.5 V178.5 H461.5 V182.5 H462.5 V188.5 H463.5 V195.5 H464.5 V202.5 H465.5 V209.5 H466.5 V216.5 H467.5 V222.5 H468.5 V227.5 H469.5 V231.5 H470.5 V233.5 H471.5 V233.5 H472.5 V231.5 H473.5 V227.5 H474.5 V221.5 H475.5 V214.5 H476.5 V205.5 H477.5 V195.5 H478.5 V185.5 H479.5 V176.5 H480.5 V166.5 H481.5 V158.5 H482.5 V151.5 H483.5 V146.5 H484.5 V142.5 H485.5 V141.5 H486.5 V141.5 H487.5 V143.5 H488.5 V147.5 H489.5 V153.5 H490.5 V159.5 H491.5 V166.5 H492.5 V173.5 H493.5 V180.5 H494.5 V187.5 H495.5 V192.5 H496.5 V196.5 H497.5 V199.5 H498.5 V200.5 H499.5 V200.5 H500.5 V199.5 H501.5 V196.5 H502.5 V192.5 H503.5 V188.5 H504.5 V184.5 H505.5 V180.5 H506.5 V176.5 H507.5 V174.5 H508.5 V172.5 H509.5 V172.5 H510.5 V174.5 H511.5 V177.5 H512.5 V182.5 H513.5 V187.5 H514.5 V194.5 H515.5 V201.5 H516.5 V208.5 H517.5 V215.5 H518.5 V222.5 H519.5 V227.5 H520.5 V231.5 H521.5 V233.5 H522.5 V233.5 H523.5 V231.5 H524.5 V227.5 H525.5 V222.5 H526.5 V215.5 H527.5 V206.5 H528.5 V197.5 H529.5 V187.5 H530.5 V177.5 H531.5 V168.5 H532.5 V159.5 H533.5 V152.5 H534.5 V146.5 H535.5 V142.5 H536.5 V141.5 H537.5 V141.5 H538.5 V143.5 H539.5 V147.5 H540.5 V152.5 H541.5 V158.5 H542.5 V165.5 H543.5 V172.5 H544.5 V179.5 H545.5 V186.5 H546.5 V192.5 H547.5 V196.5 H548.5 V199.5 H549.5 V200.5 H550.5 V200.5 H551.5 V199.5 H552.5 V196.5 H553.5 V193.5 H554.5 V189.5 H555.5 V184.5 H556.5 V180.5 H557.5 V177.5 H558.5 V174.5 H559.5 V173.5 H560.5 V172.5 H561.5 V174.5 H562.5 V177.5 H563.5 V181.5 H564.5 V186.5 H565.5 V193.5 H566.5 V200.5 H567.5 V207.5 H568.5 V214.5 H569.5 V221.5 H570.5 V226.5 H571.5 V230.5 H572.5 V233.5 H573.5 V233.5 H574.5 V232.5 H575.5 V228.5 H576.5 V223.5 H577.5 V216.5 H578.5 V207.5 H579.5 V192.5" fill="none" stroke="#ff00ff" stroke-width="1"/><rect x="580" y="187" width="602" height="1" fill="#ff00ff"/><rect x="376" y="810" width="818" height="1" fill="#fff"/><rect x="962" y="784" width="216" height="1" fill="rgba(0,0,0,0.3)"/><rect x="962" y="790" width="216" height="1" fill="rgba(0,0,0,0.3)"/><rect x="930" y="809" width="248" height="2" fill="rgba(0,0,0,0.22)"/><rect x="436" y="46" width="2" height="764" fill="#ffff00"/><rect x="436" y="30" width="71" height="16" fill="#fff"/><rect x="437" y="31" width="69" height="14" fill="#ffff00"/><text y="40" class="mono" fill="#000" style="color:#000"><tspan x="438.5">1</tspan><tspan x="444.5">.</tspan><tspan x="450.5">2</tspan><tspan x="456.5">2</tspan><tspan x="462.5">0</tspan><tspan x="468.5">0</tspan><tspan x="474.5">0</tspan><tspan x="480.5">0</tspan><tspan x="492.5">u</tspan><tspan x="498.5">s</tspan></text></svg>
</body></html>
